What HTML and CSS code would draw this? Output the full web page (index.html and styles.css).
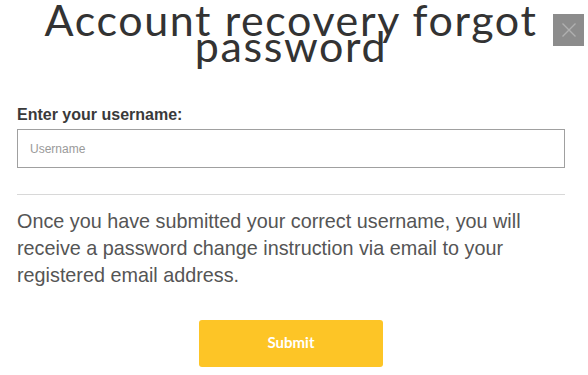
FILE: index.html
```html
<!DOCTYPE html>
<html lang="en">
<head>
<meta charset="utf-8">
<title>Account recovery</title>
<link rel="stylesheet" href="styles.css">
</head>
<body>
<div class="modal">
  <button class="close" type="button" aria-label="Close">
    <svg width="16" height="16" viewBox="0 0 16 16"><path d="M1.5 1.5 L14.5 14.5 M14.5 1.5 L1.5 14.5" stroke="#b0b0b0" stroke-width="1.4" fill="none"/></svg>
  </button>
  <h1 class="title">Account recovery forgot<br>password</h1>
  <form class="form">
    <label class="label" for="username">Enter your username:</label>
    <input class="input" id="username" type="text" placeholder="Username">
    <hr class="divider">
    <p class="info">Once you have submitted your correct username, you will receive a password change instruction via email to your registered email address.</p>
    <div class="actions">
      <button class="submit" type="button">Submit</button>
    </div>
  </form>
</div>
</body>
</html>
```
FILE: styles.css
```css
html, body {
  margin: 0;
  padding: 0;
  background: #fff;
}
.modal {
  position: relative;
  width: 548px;
  padding: 0 23px 0 17px;
  font-family: "Liberation Sans", Arial, sans-serif;
}
.close {
  position: absolute;
  top: 7px;
  right: 4px;
  width: 31px;
  height: 32px;
  border: 0;
  padding: 0;
  background: #8c8c8c;
  display: flex;
  align-items: center;
  justify-content: center;
}
.title {
  margin: 7px 0 0;
  font-family: Lato, "Open Sans", sans-serif;
  font-weight: 400;
  font-size: 43px;
  letter-spacing: 1.6px;
  line-height: 26px;
  color: #333;
  text-align: center;
}
.form {
  display: flex;
  flex-direction: column;
}
.label {
  margin-top: 47px;
  font-size: 16px;
  font-weight: 700;
  color: #3a3a3a;
  line-height: 18px;
}
.input {
  margin-top: 5px;
  box-sizing: border-box;
  height: 39px;
  width: 100%;
  border: 1px solid #a0a0a0;
  padding: 0 12px;
  font-family: "Liberation Sans", Arial, sans-serif;
  font-size: 12px;
  color: #333;
  outline: none;
}
.input::placeholder {
  color: #9a9a9a;
}
.divider {
  margin: 26px 0 0;
  border: 0;
  border-top: 1px solid #d8d8d8;
  height: 0;
}
.info {
  margin: 13px 0 0;
  font-size: 19.8px;
  line-height: 27px;
  color: #555;
}
.actions {
  display: flex;
  justify-content: center;
  margin-top: 31px;
}
.submit {
  width: 184px;
  height: 47px;
  border: 0;
  border-radius: 3px;
  padding: 0 0 3px;
  background: #fdc526;
  color: #fff;
  font-family: Lato, "Open Sans", sans-serif;
  font-weight: 700;
  font-size: 15px;
}
```
